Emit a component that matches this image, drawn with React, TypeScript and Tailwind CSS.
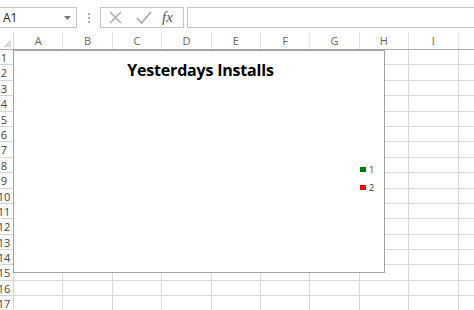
const COLS = ['A', 'B', 'C', 'D', 'E', 'F', 'G', 'H', 'I', ''];
const ROWS = Array.from({ length: 17 }, (_, i) => i + 1);

function FormulaBar() {
  return (
    <div className="flex h-[32px] items-start pt-[7px] bg-white">
      {/* name box */}
      <div className="w-[77px] h-[21px] border border-l-0 border-[#c6c6c6] flex items-center justify-between pl-[3px] pr-[5px] text-[12px] text-[#222]">
        <span>A1</span>
        <svg width="7" height="4" viewBox="0 0 7 4">
          <path d="M0 0h7L3.5 4z" fill="#777" />
        </svg>
      </div>
      <div className="w-[23px] h-[21px] flex flex-col items-center justify-center gap-[2px]">
        <span className="w-[2px] h-[2px] bg-[#b0b0b0]" />
        <span className="w-[2px] h-[2px] bg-[#b0b0b0]" />
        <span className="w-[2px] h-[2px] bg-[#b0b0b0]" />
      </div>
      {/* cancel / enter / fx */}
      <div className="w-[84px] h-[21px] border border-[#c6c6c6] flex items-center">
        <svg className="ml-[8px]" width="13" height="13" viewBox="0 0 13 13">
          <path d="M1 1l11 11M12 1L1 12" stroke="#a8a8a8" strokeWidth="1.4" />
        </svg>
        <svg className="ml-[14px]" width="16" height="13" viewBox="0 0 16 13">
          <path d="M1 7l4.5 5L15 1" stroke="#a8a8a8" strokeWidth="1.6" fill="none" />
        </svg>
        <span className="ml-[10px] text-[15px] italic text-[#555] leading-none font-['Liberation_Serif',serif]">
          fx
        </span>
      </div>
      <div className="ml-[3px] flex-1 h-[21px] border border-r-0 border-[#c6c6c6]" />
    </div>
  );
}

function Chart() {
  return (
    <div className="absolute left-[13px] top-[18px] w-[372px] h-[223px] bg-white border border-[#a3a3a3]">
      <div className="pt-[8px] pl-[3px] text-center text-[16px] font-bold text-black font-['Open_Sans',sans-serif] leading-[22px] tracking-[-0.2px]">
        Yesterdays Installs
      </div>
      <div className="absolute left-[346px] top-[113px] flex flex-col gap-[7px] text-[9px] leading-[11px] text-[#404040] font-['Open_Sans',sans-serif]">
        <div className="flex items-center gap-[3px]">
          <span className="w-[6px] h-[5px] bg-[#007a00]" />
          <span>1</span>
        </div>
        <div className="flex items-center gap-[3px]">
          <span className="w-[6px] h-[5px] bg-[#ff0000]" />
          <span>2</span>
        </div>
      </div>
    </div>
  );
}

export default function App() {
  return (
    <div className="w-[474px] h-[310px] overflow-hidden bg-white font-['Open_Sans',sans-serif]">
      <FormulaBar />
      <div className="relative">
        {/* column headers */}
        <div className="flex h-[18px] border-b border-[#ababab]">
          <div className="w-[14px] shrink-0 border-r border-[#d5d5d5] flex items-end justify-end pr-[2px] pb-[2px]">
            <svg width="8" height="8" viewBox="0 0 8 8">
              <path d="M8 0V8H0z" fill="#dcdcdc" />
            </svg>
          </div>
          {COLS.map((c, i) => (
            <div
              key={i}
              className="w-[49.4px] shrink-0 border-r border-[#e1e1e1] flex items-center justify-center text-[11px] text-[#666] pt-[1px]"
            >
              {c}
            </div>
          ))}
        </div>
        {/* rows */}
        {ROWS.map((r) => (
          <div key={r} className="flex h-[15.4px]">
            <div className="w-[14px] shrink-0 overflow-hidden border-r border-b border-[#d5d5d5]">
              <div className="w-[20px] -ml-[6px] text-center text-[11px] leading-[15px] text-[#444]">{r}</div>
            </div>
            {COLS.map((_, i) => (
              <div key={i} className="w-[49.4px] shrink-0 border-r border-b border-[#dadada]" />
            ))}
          </div>
        ))}
        <Chart />
      </div>
    </div>
  );
}
